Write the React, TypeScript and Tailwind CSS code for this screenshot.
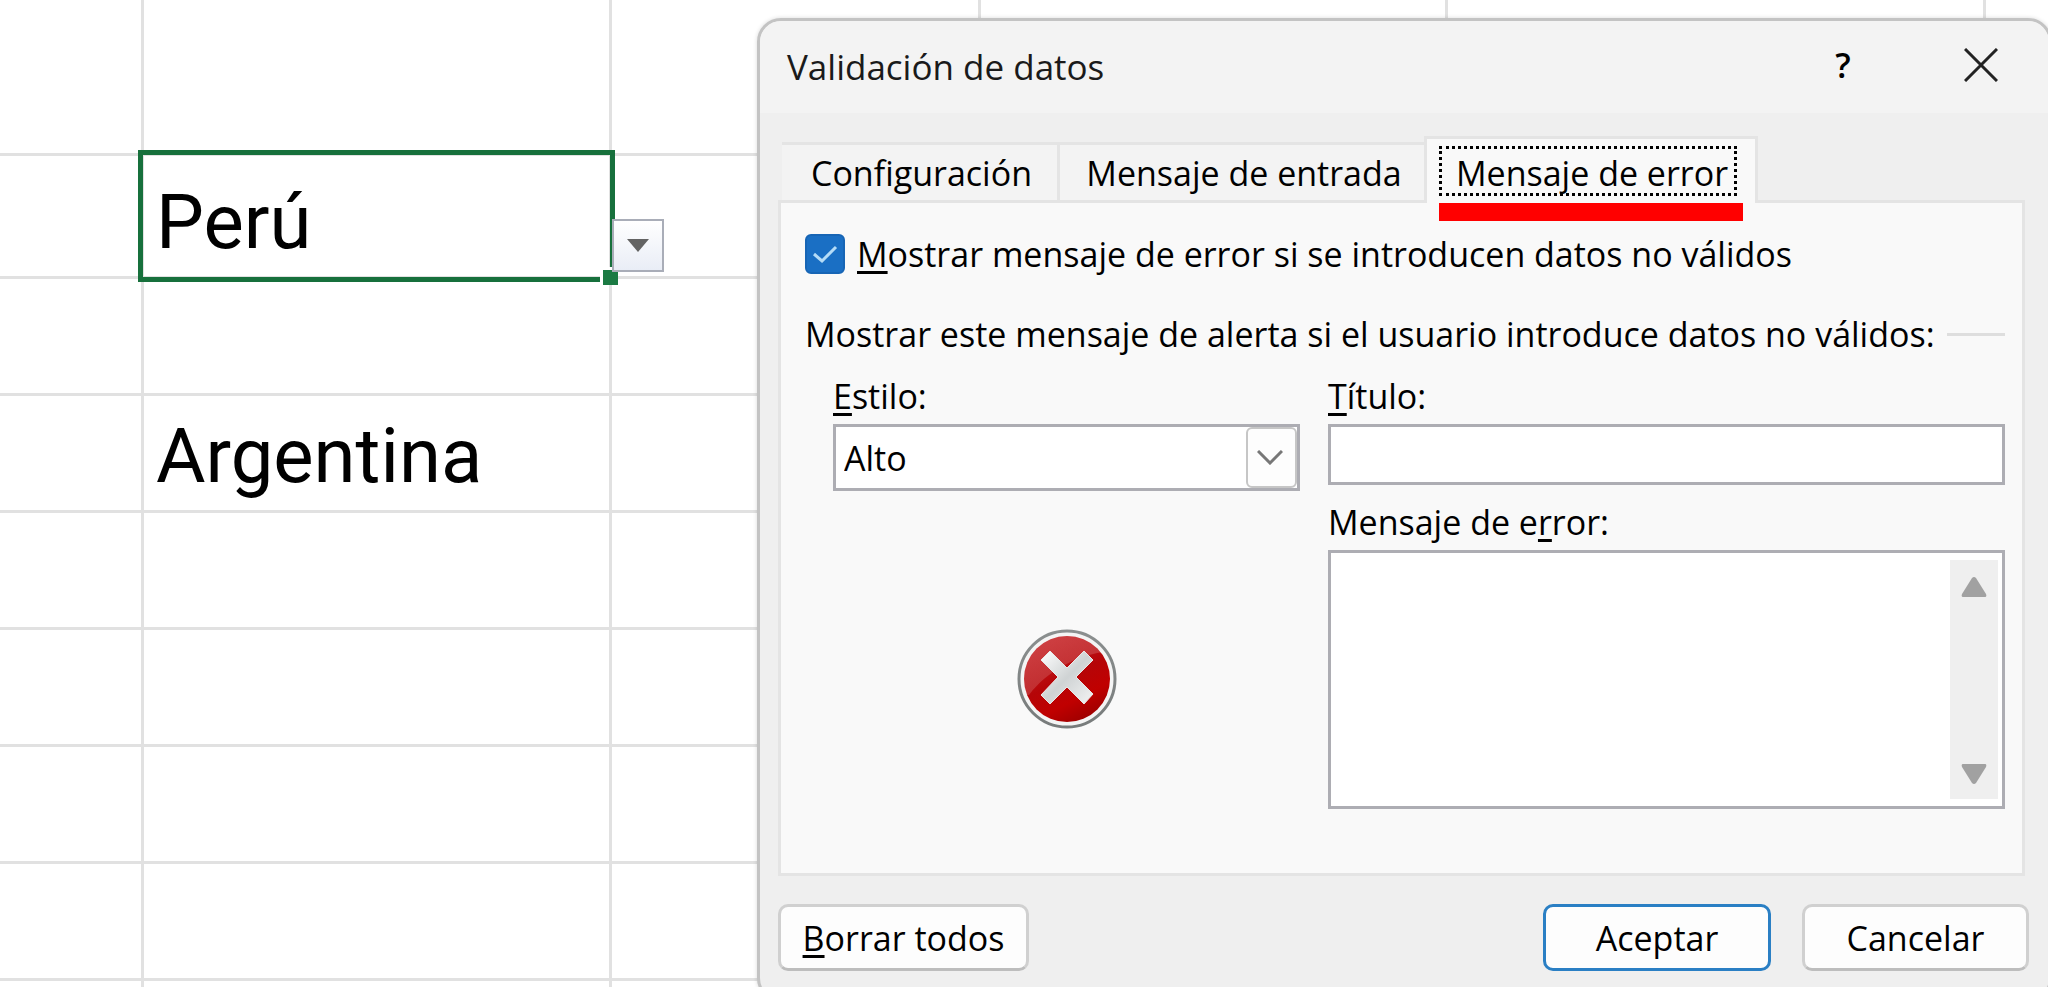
import React, { useState } from "react";
import clsx from "clsx";

const ROWS = ["", "Perú", "", "Argentina", "", "", "", "", ""];
const TABS = ["Configuración", "Mensaje de entrada", "Mensaje de error"];

const rowHeight = (index: number) => {
  if (index === 0) return "h-[156px]";
  if (index === 1) return "h-[123px]";
  return "h-[117px]";
};

const Sheet = () => (
  <table className="w-full table-fixed border-separate border-spacing-0">
    <colgroup>
      <col className="w-[144px]" />
      <col className="w-[468px]" />
      <col className="w-[369px]" />
      <col className="w-[467px]" />
      <col className="w-[538px]" />
      <col />
    </colgroup>
    <tbody>
      {ROWS.map((value, index) => (
        <tr key={index} className={rowHeight(index)}>
          {[0, 1, 2, 3, 4, 5].map((col) => (
            <td
              key={col}
              className="relative border-r-[3px] border-b-[3px] border-[#e1e1e1] p-0 align-bottom last:border-r-0"
            >
              {col === 1 && value && (
                <span className="block pb-4 pl-3 font-['Roboto',sans-serif] text-[76px] leading-none">
                  {value}
                </span>
              )}
              {col === 1 && index === 1 && <CellSelection />}
            </td>
          ))}
        </tr>
      ))}
    </tbody>
  </table>
);

const CellSelection = () => (
  <>
    <div className="absolute -inset-x-[6px] -top-[6px] -bottom-[6px] z-10 border-[5px] border-[#17703c]" />
    <div className="absolute -right-[9px] -bottom-[9px] z-10 size-[18px] border-t-[3px] border-l-[3px] border-white bg-[#1b7a43]" />
    <button
      aria-label="Abrir lista"
      className="absolute -right-[55px] bottom-1 z-20 flex h-[53px] w-[52px] items-center justify-center border-2 border-[#a9adb8] bg-linear-to-b from-white to-[#e9edf6]"
    >
      <svg width="22" height="13" viewBox="0 0 22 13">
        <path d="M0 0h22L11 13z" fill="#636363" />
      </svg>
    </button>
  </>
);

const StopIcon = () => (
  <svg width="100" height="100" viewBox="0 0 100 100" role="img" aria-label="Alto">
    <defs>
      <linearGradient id="ring" x1="0" y1="0" x2="0" y2="1">
        <stop offset="0" stopColor="#8b8f8f" />
        <stop offset="1" stopColor="#777b7b" />
      </linearGradient>
      <linearGradient id="red" x1="0.2" y1="0" x2="0.7" y2="1">
        <stop offset="0" stopColor="#c9282b" />
        <stop offset="0.5" stopColor="#b50508" />
        <stop offset="0.75" stopColor="#c00000" />
        <stop offset="1" stopColor="#9c0000" />
      </linearGradient>
      <linearGradient id="gloss" x1="0" y1="0" x2="1" y2="1">
        <stop offset="0" stopColor="#fff" stopOpacity="0.1" />
        <stop offset="1" stopColor="#fff" stopOpacity="0.2" />
      </linearGradient>
      <linearGradient id="cross" x1="0" y1="0" x2="1" y2="1">
        <stop offset="0" stopColor="#fff" />
        <stop offset="0.5" stopColor="#cfd3d4" />
        <stop offset="1" stopColor="#f4f4f4" />
      </linearGradient>
      <clipPath id="disc">
        <circle cx="50" cy="50" r="43" />
      </clipPath>
    </defs>
    <circle cx="50" cy="50" r="48" fill="#f4f4f4" stroke="url(#ring)" strokeWidth="3" />
    <circle cx="50" cy="50" r="43" fill="url(#red)" />
    <g clipPath="url(#disc)">
      <path d="M0 0h92v22C60 26 30 42 12 66H0z" fill="url(#gloss)" />
    </g>
    <path
      d="M33 22 50 39 67 22 76 31 59 48 76 65 67 75 50 58 33 75 24 66 41 48 24 31z"
      fill="url(#cross)"
      stroke="#e8e8e8"
      strokeWidth="1"
      strokeLinejoin="round"
    />
  </svg>
);

const ScrollArrow = ({ down = false }: { down?: boolean }) => (
  <svg width="26" height="20" viewBox="0 0 26 20" className={clsx(down && "rotate-180")}>
    <path d="M11 1Q13-1 15 1L25 17Q26 20 24 20H2Q0 20 1 17z" fill="#a1a1a1" />
  </svg>
);

// Letter underlined as the keyboard shortcut
const Key = ({ children }: { children: React.ReactNode }) => (
  <span className="underline decoration-[3px] underline-offset-4">{children}</span>
);

type DialogButtonProps = {
  primary?: boolean;
  className?: string;
  children: React.ReactNode;
};

const DialogButton = ({ primary, className, children }: DialogButtonProps) => (
  <button
    className={clsx(
      "h-[67px] rounded-[10px] border-[3px] bg-[#fdfdfd] leading-10",
      primary ? "border-[#2a7fc4]" : "border-[#d0d0d0] border-b-[#bdbdbd]",
      className,
    )}
  >
    {children}
  </button>
);

const ValidationDialog = () => {
  const [tab, setTab] = useState(2);
  const [showError, setShowError] = useState(true);

  return (
    <div
      role="dialog"
      aria-label="Validación de datos"
      className="absolute top-[18px] -right-1 left-[757px] z-30 overflow-hidden rounded-[24px] border-[3px] border-[#c3c3c3] bg-[#efefef] pb-7 text-[34px] leading-10 shadow-[0_0_4px_rgba(0,0,0,0.15)]"
    >
      <header className="flex h-[92px] items-start justify-between bg-[#f3f3f3] pt-[26px] pr-[50px] pl-[27px]">
        <h1 className="text-[35px] text-[#1a1a1a]">Validación de datos</h1>
        <div className="flex gap-[108px]">
          <button aria-label="Ayuda" className="h-9 w-6 leading-9 font-semibold">
            ?
          </button>
          <button aria-label="Cerrar" className="flex h-9 w-9 items-center justify-center">
            <svg width="34" height="34" viewBox="0 0 34 34" stroke="#222" strokeWidth="3">
              <path d="M1 1 33 33M33 1 1 33" />
            </svg>
          </button>
        </div>
      </header>

      <div className="pr-6 pl-[18px]">
        <div role="tablist" className="relative z-10 -mb-[3px] flex items-end pt-[23px] pl-1">
          {TABS.map((name, index) => (
            <button
              key={name}
              role="tab"
              aria-selected={tab === index}
              onClick={() => setTab(index)}
              className={clsx(
                "border-t-[3px] border-[#e4e4e4]",
                tab === index
                  ? "relative h-[67px] border-x-[3px] bg-[#f9f9f9] pr-[18px] pl-3"
                  : "h-[61px] border-b-[3px] bg-[#f3f3f3]",
                index === 0 && "w-[278px] border-r-[3px] pl-1",
                index === 1 && "w-[364px] pl-1",
              )}
            >
              {tab === index ? (
                <>
                  <span className="block border-[3px] border-dotted border-black pt-1 pr-1.5 pl-3.5">
                    {name}
                  </span>
                  <span className="absolute top-[64px] right-3 left-3 h-[18px] bg-[#ff0000]" />
                </>
              ) : (
                name
              )}
            </button>
          ))}
        </div>

        <section className="border-[3px] border-[#e4e4e4] bg-[#f9f9f9] pt-[31px] pr-[17px] pb-16 pl-6">
          <label className="flex items-center gap-3">
            <span className="relative flex size-10">
              <input
                type="checkbox"
                checked={showError}
                onChange={(e) => setShowError(e.target.checked)}
                className="size-10 appearance-none rounded-md border-2 border-[#1765b5] bg-white checked:bg-[#1a6fc4]"
              />
              {showError && (
                <svg
                  viewBox="0 0 40 40"
                  className="pointer-events-none absolute inset-0"
                  fill="none"
                  stroke="#b5dcf7"
                  strokeWidth="3"
                >
                  <path d="M9 20 17 27 31 13" />
                </svg>
              )}
            </span>
            <span>
              <Key>M</Key>ostrar mensaje de error si se introducen datos no válidos
            </span>
          </label>

          <div className="mt-10 flex items-center gap-3">
            <p className="whitespace-nowrap">
              Mostrar este mensaje de alerta si el usuario introduce datos no válidos:
            </p>
            <div className="h-[3px] flex-1 bg-[#dedede]" />
          </div>

          <div className="mt-[22px] flex gap-7 pl-7">
            <div className="flex w-[467px] flex-col">
              <label htmlFor="style">
                <Key>E</Key>stilo:
              </label>
              <div className="relative mt-2">
                <select
                  id="style"
                  className="block h-[67px] w-full appearance-none border-[3px] border-[#adadb3] bg-white pl-2"
                >
                  <option>Alto</option>
                  <option>Advertencia</option>
                  <option>Información</option>
                </select>
                <span className="pointer-events-none absolute inset-y-[3px] right-[3px] flex w-[51px] items-center justify-center rounded-md border-2 border-[#c6c6c6] bg-[#fdfdfd] pr-1">
                  <svg width="26" height="15" viewBox="0 0 26 15" fill="none" stroke="#777" strokeWidth="3">
                    <path d="M1 1 13 13 25 1" />
                  </svg>
                </span>
              </div>
              <div className="mt-[138px] flex justify-center">
                <StopIcon />
              </div>
            </div>

            <div className="flex flex-1 flex-col">
              <label htmlFor="title">
                <Key>T</Key>ítulo:
              </label>
              <input
                id="title"
                className="mt-2 h-[61px] border-[3px] border-[#adadb3] bg-white px-2"
              />
              <label htmlFor="message" className="mt-[17px]">
                Mensaje de e<Key>r</Key>ror:
              </label>
              <div className="mt-2 flex h-[259px] border-[3px] border-[#adadb3] bg-white py-[7px] pr-1">
                <textarea id="message" className="min-w-0 flex-1 resize-none px-2 outline-none" />
                <div className="flex w-12 flex-col items-center justify-between bg-[#efefef] pt-[17px] pb-[15px]">
                  <ScrollArrow />
                  <ScrollArrow down />
                </div>
              </div>
            </div>
          </div>
        </section>

        <footer className="mt-7 -mr-1 flex gap-[31px]">
          <DialogButton className="mr-auto w-[251px]">
            <Key>B</Key>orrar todos
          </DialogButton>
          <DialogButton primary className="w-[228px]">
            Aceptar
          </DialogButton>
          <DialogButton className="w-[227px]">Cancelar</DialogButton>
        </footer>
      </div>
    </div>
  );
};

const App = () => (
  <main className="relative h-screen overflow-hidden bg-white font-['Open_Sans',sans-serif] text-black">
    <Sheet />
    <ValidationDialog />
  </main>
);

export default App;
